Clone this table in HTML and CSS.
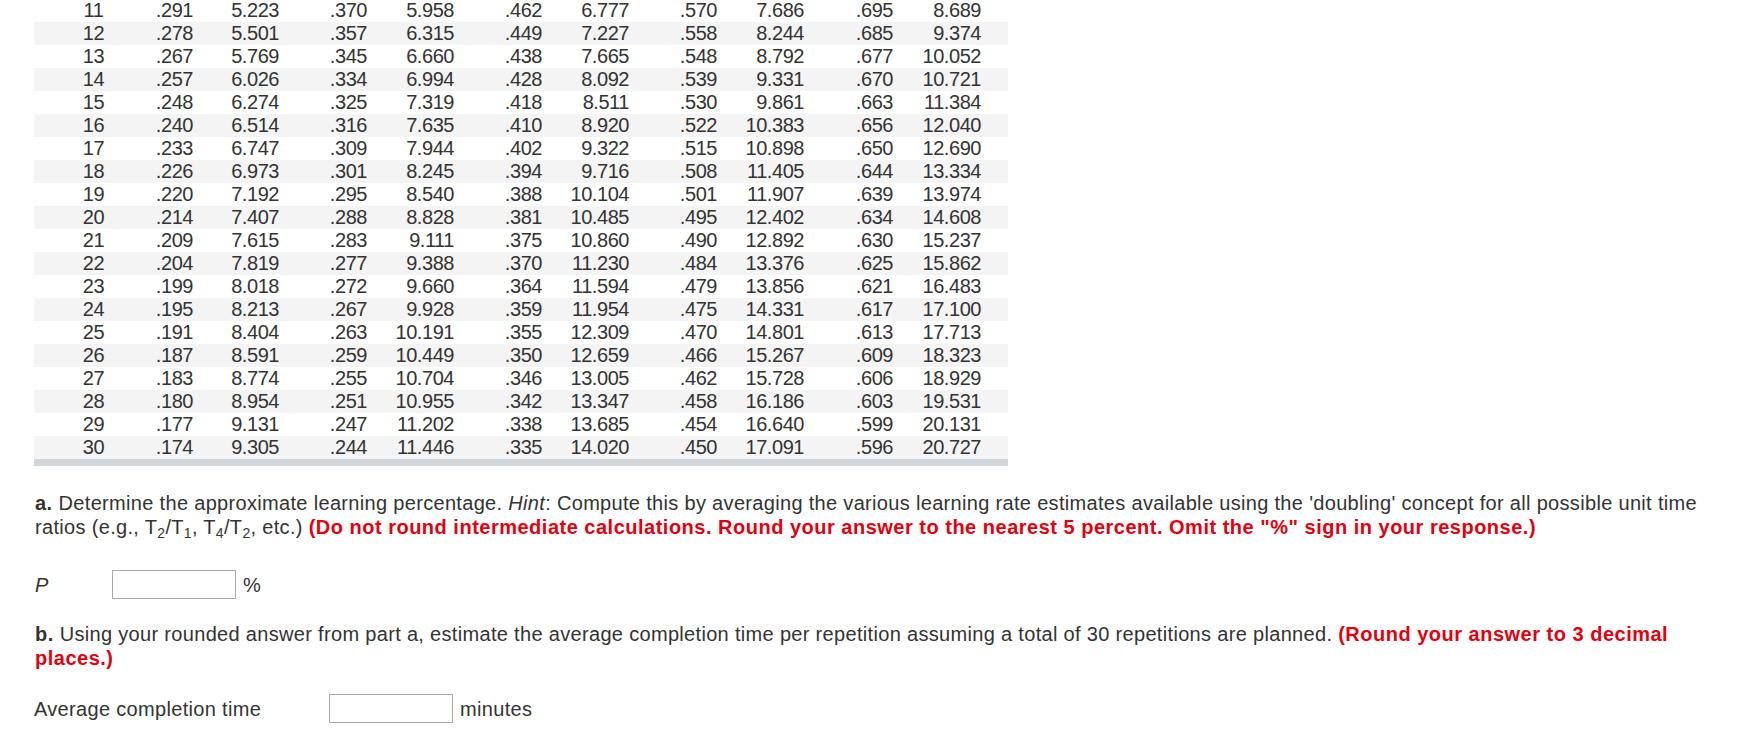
FILE: index.html
```html
<!DOCTYPE html>
<html>
<head>
<meta charset="utf-8">
<link rel="stylesheet" href="styles.css">
</head>
<body>
<table class="lc-table">
<colgroup>
<col class="c-unit"><col class="c2"><col class="c3"><col class="c4"><col class="c5"><col class="c6"><col class="c7"><col class="c8"><col class="c9"><col class="c10"><col class="c11"><col class="c-fill">
</colgroup>
<tbody id="rows">
<tr><td>11</td><td>.291</td><td>5.223</td><td>.370</td><td>5.958</td><td>.462</td><td>6.777</td><td>.570</td><td>7.686</td><td>.695</td><td>8.689</td><td></td></tr>
<tr><td>12</td><td>.278</td><td>5.501</td><td>.357</td><td>6.315</td><td>.449</td><td>7.227</td><td>.558</td><td>8.244</td><td>.685</td><td>9.374</td><td></td></tr>
<tr><td>13</td><td>.267</td><td>5.769</td><td>.345</td><td>6.660</td><td>.438</td><td>7.665</td><td>.548</td><td>8.792</td><td>.677</td><td>10.052</td><td></td></tr>
<tr><td>14</td><td>.257</td><td>6.026</td><td>.334</td><td>6.994</td><td>.428</td><td>8.092</td><td>.539</td><td>9.331</td><td>.670</td><td>10.721</td><td></td></tr>
<tr><td>15</td><td>.248</td><td>6.274</td><td>.325</td><td>7.319</td><td>.418</td><td>8.511</td><td>.530</td><td>9.861</td><td>.663</td><td>11.384</td><td></td></tr>
<tr><td>16</td><td>.240</td><td>6.514</td><td>.316</td><td>7.635</td><td>.410</td><td>8.920</td><td>.522</td><td>10.383</td><td>.656</td><td>12.040</td><td></td></tr>
<tr><td>17</td><td>.233</td><td>6.747</td><td>.309</td><td>7.944</td><td>.402</td><td>9.322</td><td>.515</td><td>10.898</td><td>.650</td><td>12.690</td><td></td></tr>
<tr><td>18</td><td>.226</td><td>6.973</td><td>.301</td><td>8.245</td><td>.394</td><td>9.716</td><td>.508</td><td>11.405</td><td>.644</td><td>13.334</td><td></td></tr>
<tr><td>19</td><td>.220</td><td>7.192</td><td>.295</td><td>8.540</td><td>.388</td><td>10.104</td><td>.501</td><td>11.907</td><td>.639</td><td>13.974</td><td></td></tr>
<tr><td>20</td><td>.214</td><td>7.407</td><td>.288</td><td>8.828</td><td>.381</td><td>10.485</td><td>.495</td><td>12.402</td><td>.634</td><td>14.608</td><td></td></tr>
<tr><td>21</td><td>.209</td><td>7.615</td><td>.283</td><td>9.111</td><td>.375</td><td>10.860</td><td>.490</td><td>12.892</td><td>.630</td><td>15.237</td><td></td></tr>
<tr><td>22</td><td>.204</td><td>7.819</td><td>.277</td><td>9.388</td><td>.370</td><td>11.230</td><td>.484</td><td>13.376</td><td>.625</td><td>15.862</td><td></td></tr>
<tr><td>23</td><td>.199</td><td>8.018</td><td>.272</td><td>9.660</td><td>.364</td><td>11.594</td><td>.479</td><td>13.856</td><td>.621</td><td>16.483</td><td></td></tr>
<tr><td>24</td><td>.195</td><td>8.213</td><td>.267</td><td>9.928</td><td>.359</td><td>11.954</td><td>.475</td><td>14.331</td><td>.617</td><td>17.100</td><td></td></tr>
<tr><td>25</td><td>.191</td><td>8.404</td><td>.263</td><td>10.191</td><td>.355</td><td>12.309</td><td>.470</td><td>14.801</td><td>.613</td><td>17.713</td><td></td></tr>
<tr><td>26</td><td>.187</td><td>8.591</td><td>.259</td><td>10.449</td><td>.350</td><td>12.659</td><td>.466</td><td>15.267</td><td>.609</td><td>18.323</td><td></td></tr>
<tr><td>27</td><td>.183</td><td>8.774</td><td>.255</td><td>10.704</td><td>.346</td><td>13.005</td><td>.462</td><td>15.728</td><td>.606</td><td>18.929</td><td></td></tr>
<tr><td>28</td><td>.180</td><td>8.954</td><td>.251</td><td>10.955</td><td>.342</td><td>13.347</td><td>.458</td><td>16.186</td><td>.603</td><td>19.531</td><td></td></tr>
<tr><td>29</td><td>.177</td><td>9.131</td><td>.247</td><td>11.202</td><td>.338</td><td>13.685</td><td>.454</td><td>16.640</td><td>.599</td><td>20.131</td><td></td></tr>
<tr><td>30</td><td>.174</td><td>9.305</td><td>.244</td><td>11.446</td><td>.335</td><td>14.020</td><td>.450</td><td>17.091</td><td>.596</td><td>20.727</td><td></td></tr>
</tbody>
</table>

<div class="question">
  <p class="prompt"><b>a.</b> Determine the approximate learning percentage. <i>Hint</i>: Compute this by averaging the various learning rate estimates available using the 'doubling' concept for all possible unit time ratios (e.g., T<sub>2</sub>/T<sub>1</sub>, T<sub>4</sub>/T<sub>2</sub>, etc.) <span class="instr">(Do not round intermediate calculations. Round your answer to the nearest 5 percent. Omit the "%" sign in your response.)</span></p>
  <div class="answer-row">
    <span class="label label-p"><i>P</i></span>
    <input class="ans-input" type="text">
    <span class="unit">%</span>
  </div>
  <p class="prompt prompt-b"><b>b.</b> Using your rounded answer from part a, estimate the average completion time per repetition assuming a total of 30 repetitions are planned. <span class="instr">(Round your answer to 3 decimal places.)</span></p>
  <div class="answer-row answer-row-b">
    <span class="label label-avg">Average completion time</span>
    <input class="ans-input" type="text">
    <span class="unit">minutes</span>
  </div>
</div>
</body>
</html>
```

FILE: styles.css
```css
html, body {
  margin: 0;
  padding: 0;
  background: #ffffff;
}

body {
  font-family: "Liberation Sans", Arial, sans-serif;
  color: #333333;
}

.lc-table {
  margin: -1px 0 0 34px;
  border-collapse: collapse;
  table-layout: fixed;
  width: 974px;
  font-size: 20px;
  letter-spacing: -0.45px;
  color: #333333;
  border-bottom: 7px solid #d1d6dd;
}

.c-unit { width: 119px; }
.c2 { width: 40px; }
.c3 { width: 86px; }
.c4 { width: 88px; }
.c5 { width: 87px; }
.c6 { width: 88px; }
.c7 { width: 87px; }
.c8 { width: 88px; }
.c9 { width: 87px; }
.c10 { width: 89px; }
.c11 { width: 88px; }
.c-fill { width: 27px; }

.lc-table td {
  height: 23px;
  padding: 0;
  line-height: 23px;
  text-align: right;
  white-space: nowrap;
}

.lc-table td:first-child {
  text-align: center;
}

.lc-table tr:nth-child(even) td {
  background: #f4f4f4;
}

.question {
  padding: 25px 8px 0 35px;
  font-size: 20px;
  line-height: 24px;
  letter-spacing: 0.32px;
}

.prompt {
  margin: 0;
}

.prompt b {
  font-weight: bold;
  letter-spacing: 0.5px;
}

.prompt sub {
  font-size: 14px;
  line-height: 0;
  vertical-align: -4px;
}

.instr {
  color: #e3000f;
  font-weight: bold;
  letter-spacing: 0.5px;
}

.answer-row {
  display: flex;
  align-items: center;
  height: 29px;
  margin: 31px 0 23px 0;
}

.answer-row-b {
  margin: 24px 0 0 -1px;
}

.label {
  flex: none;
}

.label-p {
  width: 77px;
}

.label-avg {
  width: 295px;
}

.ans-input {
  box-sizing: border-box;
  width: 124px;
  height: 29px;
  margin: 0;
  padding: 0 4px;
  border: 1px solid #a9a9a9;
  border-radius: 0;
  background: #ffffff;
  font: inherit;
}

.unit {
  margin-left: 7px;
}
```
